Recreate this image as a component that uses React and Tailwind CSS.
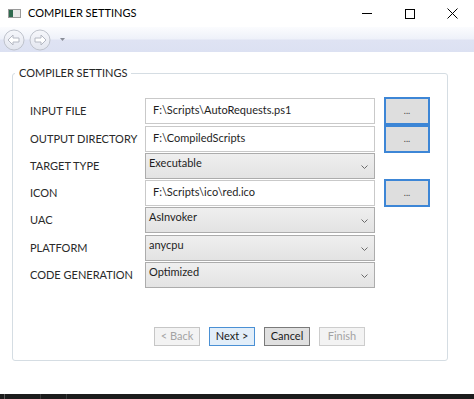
import React from "react";

const rows = [
  { label: "INPUT FILE", kind: "text", value: "F:\\Scripts\\AutoRequests.ps1", btn: true, mt: "mt-0" },
  { label: "OUTPUT DIRECTORY", kind: "text", value: "F:\\CompiledScripts", btn: true, mt: "mt-[2px]" },
  { label: "TARGET TYPE", kind: "combo", value: "Executable", btn: false, mt: "mt-[1px]" },
  { label: "ICON", kind: "text", value: "F:\\Scripts\\ico\\red.ico", btn: true, mt: "mt-[1px]" },
  { label: "UAC", kind: "combo", value: "AsInvoker", btn: false, mt: "mt-[1px]" },
  { label: "PLATFORM", kind: "combo", value: "anycpu", btn: false, mt: "mt-[2px]" },
  { label: "CODE GENERATION", kind: "combo", value: "Optimized", btn: false, mt: "mt-[1px]" },
];

function NavCircle({ dir }) {
  return (
    <svg width="22" height="22" viewBox="0 0 22 22">
      <defs>
        <linearGradient id={"g" + dir} x1="0" y1="0" x2="0" y2="1">
          <stop offset="0" stopColor="#f6f7fb" />
          <stop offset="1" stopColor="#e3e6ef" />
        </linearGradient>
      </defs>
      <circle cx="11" cy="11" r="10" fill={"url(#g" + dir + ")"} stroke="#bfc3cc" strokeWidth="1" />
      {dir === "l" ? (
        <path d="M5 11 L10 6 L10 9 L16 9 L16 13 L10 13 L10 16 Z" fill="#ffffff" stroke="#b4b8c2" strokeWidth="1" strokeLinejoin="round" />
      ) : (
        <path d="M17 11 L12 6 L12 9 L6 9 L6 13 L12 13 L12 16 Z" fill="#ffffff" stroke="#b4b8c2" strokeWidth="1" strokeLinejoin="round" />
      )}
    </svg>
  );
}

function Chevron() {
  return (
    <svg width="7" height="5" viewBox="0 0 7 5" className="shrink-0">
      <path d="M0.5 0.5 L3.5 3.5 L6.5 0.5" fill="none" stroke="#6a6a6a" strokeWidth="1" />
    </svg>
  );
}

export default function App() {
  return (
    <div className="w-[474px] h-[399px] bg-white overflow-hidden flex flex-col font-['Lato',sans-serif] text-[11px] text-[#1e1e1e]">
      {/* Title bar */}
      <div className="h-[27px] flex items-center shrink-0">
        <div className="w-[28px] flex items-center pl-[8px]">
          <svg width="13" height="9" viewBox="0 0 13 9">
            <rect x="0.5" y="0.5" width="12" height="8" fill="#e8e8e8" stroke="#9a9a9a" />
            <rect x="1" y="1" width="4" height="7" fill="#2f6a4e" />
          </svg>
        </div>
        <span className="text-[11px] text-black">COMPILER SETTINGS</span>
        <div className="ml-auto flex h-full">
          <div className="w-[43px] h-full flex items-center justify-center">
            <div className="w-[10px] h-px bg-black" />
          </div>
          <div className="w-[43px] h-full flex items-center justify-center">
            <div className="w-[10px] h-[10px] border border-black" />
          </div>
          <div className="w-[43px] h-full flex items-center justify-center">
            <svg width="11" height="11" viewBox="0 0 11 11">
              <path d="M0.5 0.5 L10.5 10.5 M10.5 0.5 L0.5 10.5" stroke="#000" strokeWidth="1" />
            </svg>
          </div>
        </div>
      </div>

      {/* Navigation bar */}
      <div className="h-[25px] shrink-0 flex items-center pl-[3px] gap-[4px] bg-[linear-gradient(to_bottom,#fbfcfe_0%,#eef1f9_48%,#dfe3f3_52%,#dce1f2_100%)]">
        <NavCircle dir="l" />
        <NavCircle dir="r" />
        <svg width="5" height="3" viewBox="0 0 5 3" className="ml-[5px]">
          <path d="M0 0 L5 0 L2.5 3 Z" fill="#8a8e98" />
        </svg>
      </div>

      {/* Group box */}
      <fieldset className="mt-[14px] ml-[12px] w-[432px] h-[295px] border border-[#d5dde3] rounded-[3px] px-[17px] shrink-0">
        <legend className="ml-[-15px] px-[4px] text-[11px] text-[#262626] leading-[14px]">COMPILER SETTINGS</legend>

        <div className="mt-[18px] flex flex-col">
          {rows.map((r) => (
            <div key={r.label} className={"h-[26px] flex items-center " + r.mt}>
              <div className="w-[115px] shrink-0 text-[#2a2a2a] pt-[1px]">{r.label}</div>
              {r.kind === "text" ? (
                <div className="w-[230px] h-[26px] shrink-0 border border-[#c9c9c9] bg-white pl-[7px] pt-[3px] text-[#1e1e1e] leading-[15px]">
                  {r.value}
                </div>
              ) : (
                <div className="w-[230px] h-[26px] shrink-0 border border-[#acacac] bg-[linear-gradient(to_bottom,#efefef,#e3e3e3)] pl-[3px] pr-[6px] flex items-start text-[#1e1e1e]">
                  <span className="leading-[15px] pt-[1px]">{r.value}</span>
                  <div className="ml-auto self-center pt-[2px]">
                    <Chevron />
                  </div>
                </div>
              )}
              {r.btn && (
                <div className="ml-[9px] w-[46px] h-[28px] shrink-0 border-2 border-[#3d86d6] bg-[#dedede] flex items-center justify-center text-[9px] leading-none text-[#444] pb-[2px]">
                  ...
                </div>
              )}
            </div>
          ))}
        </div>

        <div className="mt-[39px] ml-[124px] flex gap-[9px]">
          <div className="w-[46px] h-[19px] border border-[#c6c6c6] bg-[#f3f3f3] flex items-center justify-center text-[#a3a3a3]">
            &lt; Back
          </div>
          <div className="w-[46px] h-[19px] border border-[#4a90d4] bg-[#e2eef9] flex items-center justify-center text-[#1a1a1a]">
            Next &gt;
          </div>
          <div className="w-[46px] h-[19px] border border-[#7a7a7a] bg-[#e0e0e0] flex items-center justify-center text-[#1a1a1a]">
            Cancel
          </div>
          <div className="w-[46px] h-[19px] border border-[#cdcdcd] bg-[#f3f3f3] flex items-center justify-center text-[#a3a3a3]">
            Finish
          </div>
        </div>
      </fieldset>

      {/* Taskbar strip */}
      <div className="mt-auto h-[5px] bg-[#1c1c1c] flex items-stretch shrink-0">
        <div className="ml-[4px] w-px bg-[#5a5a5a]" />
        <div className="ml-[35px] w-px bg-[#3a3a3a]" />
        <div className="ml-[25px] w-px bg-[#3a3a3a]" />
      </div>
    </div>
  );
}
